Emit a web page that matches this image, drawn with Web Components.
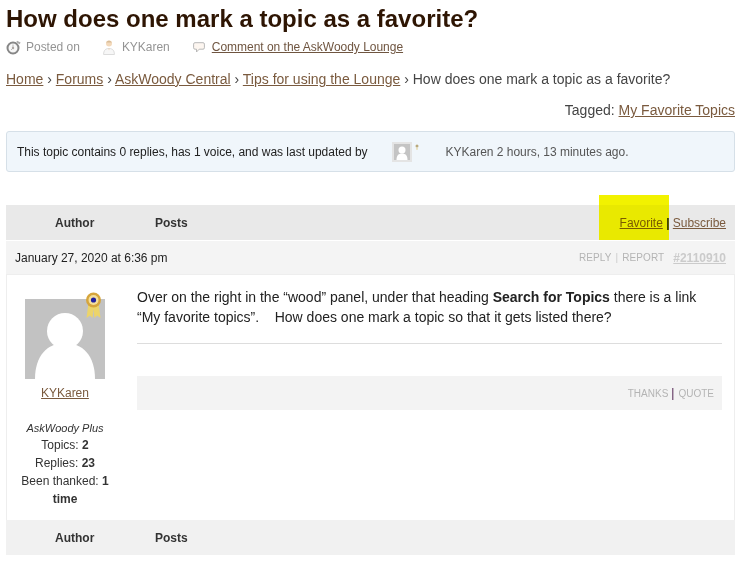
<!DOCTYPE html>
<html>
<head>
<meta charset="utf-8">
<title>How does one mark a topic as a favorite?</title>
<style>
  html, body { margin: 0; background: #fff; }
  body { font-family: "Liberation Sans", Arial, sans-serif; color: #222; }
</style>
</head>
<body>
<topic-page></topic-page>

<template id="topic-head-tpl">
  <style>
    :host { display: block; }
    h1 { margin: 0; font-size: 24px; line-height: 28px; font-weight: 700; color: #2e1503; padding-top: 5px; }
    .meta { display: flex; align-items: center; height: 20px; margin-top: 4px; font-size: 12px; letter-spacing: -.02px; color: #949494; }
    .meta svg { display: block; flex: none; }
    .m1 { margin-right: 5px; }
    .m2 { margin-left: 23px; margin-right: 7px; }
    .m3 { margin-left: 23px; margin-right: 7px; }
    .meta a { color: #6f5540; text-decoration: underline; }
    .crumbs { margin-top: 12px; font-size: 14px; line-height: 20px; color: #444; }
    .crumbs a { color: #7a5a3e; text-decoration: underline; }
    .tags { margin-top: 11px; text-align: right; font-size: 14px; line-height: 20px; color: #444; }
    .tags a { color: #7a5a3e; text-decoration: underline; }
  </style>
  <h1>How does one mark a topic as a favorite?</h1>
  <div class="meta">
    <svg class="m1" width="15" height="15" viewBox="0 0 15 15">
      <circle cx="7" cy="8" r="5.500" fill="#f7f7f7" stroke="#868686" stroke-width="2"/>
      <circle cx="7" cy="8" r="1.200" fill="#b0a6a0"/>
      <path d="M7 4.500V8L5 10" fill="none" stroke="#a8a8a8" stroke-width=".8"/>
      <path d="M11 .8l3.600 1.800-1 1.700-3.300-2z" fill="#aaa"/>
    </svg>
    <span>Posted on</span>
    <svg class="m2" width="12" height="15" viewBox="0 0 12 15">
      <circle cx="6" cy="3.600" r="3" fill="#f3d9bb"/>
      <path d="M3.200 2.500c.8-2.200 4.800-2.200 5.600 0z" fill="#d9bd98"/>
      <path d="M.6 14.500c0-4.200 2-6 5.400-6s5.400 1.800 5.400 6z" fill="#f7f7f7" stroke="#d4d4d4" stroke-width=".8"/>
      <path d="M5.200 8.500h1.600l-.8 2z" fill="#f0d4b4"/>
    </svg>
    <span>KYKaren</span>
    <svg class="m3" width="12" height="11" viewBox="0 0 12 11">
      <path d="M2 .7h8a1.400 1.400 0 0 1 1.400 1.400v3.700a1.400 1.400 0 0 1-1.400 1.400H6.200L3.500 10V7.200H2A1.400 1.400 0 0 1 .6 5.800V2.100A1.400 1.400 0 0 1 2 .7z" fill="#fdf6f0" stroke="#b8b8b8"/>
    </svg>
    <a href="#">Comment on the AskWoody Lounge</a>
  </div>
  <div class="crumbs"><a href="#">Home</a> › <a href="#">Forums</a> › <a href="#">AskWoody Central</a> › <a href="#">Tips for using the Lounge</a> › How does one mark a topic as a favorite?</div>
  <div class="tags">Tagged: <a href="#">My Favorite Topics</a></div>
</template>

<template id="topic-notice-tpl">
  <style>
    :host { display: flex; align-items: center; height: 39px; margin-top: 11px; padding-left: 10px; background: #f0f6fb; border: 1px solid #d6e0e8; border-radius: 3px; font-size: 12px; letter-spacing: -.015px; color: #222; }
    .thumb { display: block; margin-left: 24px; flex: none; }
    .dot { display: block; margin-left: 3px; flex: none; align-self: flex-start; margin-top: 12px; }
    .who { margin-left: 27px; color: #555; }
  </style>
  <span>This topic contains 0 replies, has 1 voice, and was last updated by</span>
  <svg class="thumb" width="20" height="20" viewBox="0 0 20 20">
    <rect width="20" height="20" fill="#e4e4e4"/>
    <rect x="2" y="2" width="16" height="16" fill="#c4c4c4"/>
    <circle cx="10" cy="8" r="3.500" fill="#fff"/>
    <path d="M4.500 18c0-4.500 2-6.500 5.500-6.500s5.500 2 5.500 6.500z" fill="#fff"/>
  </svg>
  <svg class="dot" width="4" height="6" viewBox="0 0 4 6">
    <circle cx="2" cy="2" r="1.500" fill="#b9a97e"/>
    <path d="M1 3.500h2L2.500 6h-1z" fill="#e8dcae"/>
  </svg>
  <span class="who">KYKaren 2 hours, 13 minutes ago.</span>
</template>

<template id="forum-bar-tpl">
  <style>
    :host { display: flex; align-items: center; height: 35px; padding-right: 9px; background: var(--bar-bg, #e9e9e9); font-size: 12px; font-weight: 700; color: #333; }
    .author { margin-left: 49px; width: 100px; }
    .right { margin-left: auto; font-weight: 400; color: #222; letter-spacing: -.02px; }
  </style>
  <span class="author">Author</span>
  <span>Posts</span>
  <span class="right"><slot></slot></span>
</template>

<template id="post-body-tpl">
  <style>
    :host { display: grid; grid-template-columns: 116px 1fr; min-height: 245px; border-left: 1px solid #eee; border-right: 1px solid #eee; box-sizing: border-box; }
    .author { display: flex; flex-direction: column; align-items: center; padding-top: 24px; font-size: 12px; line-height: 18px; color: #333; text-align: center; }
    .avatar { position: relative; width: 80px; height: 80px; }
    .avatar svg.pic { display: block; }
    .badge { position: absolute; left: 60px; top: -7px; }
    .name { margin-top: 4px; color: #7a5a3e; text-decoration: underline; line-height: 20px; letter-spacing: -.03px; }
    .rank { margin-top: 16px; font-size: 11px; font-style: italic; }
    .stats { width: 96px; margin-top: -1px; }
    .stats div { line-height: 18px; }
    .main { padding: 12px 12px 0 14px; }
    p { margin: 0; font-size: 14px; line-height: 20px; color: #222; padding-bottom: 16px; border-bottom: 1px solid #ddd; }
    .actions { display: flex; justify-content: flex-end; align-items: center; gap: 4px; height: 34px; margin-top: 32px; padding-right: 8px; background: #f3f3f3; font-size: 10px; color: #b4b4b4; }
    .sep { margin-left: -1px; color: #4a1a4a; font-size: 12px; }
  </style>
  <div class="author">
    <div class="avatar">
      <svg class="pic" width="80" height="80" viewBox="0 0 80 80">
        <rect width="80" height="80" fill="#c2c2c2"/>
        <circle cx="40" cy="32" r="18" fill="#fff"/>
        <path d="M10 80C10 57 22 44 40 44S70 57 70 80z" fill="#fff"/>
      </svg>
      <svg class="badge" width="17" height="27" viewBox="0 0 17 27">
        <path d="M3.500 11L1.500 26l3.500-2.500L7.500 26 8.500 17l1 9 2.500-2.500L15.500 26l-2-15z" fill="#ecd46a"/>
        <circle cx="8.500" cy="8" r="7.500" fill="#d6a53c"/>
        <circle cx="8.500" cy="8" r="5" fill="#f4df9c"/>
        <circle cx="8.500" cy="8" r="2.600" fill="#2020a0"/>
      </svg>
    </div>
    <div class="name">KYKaren</div>
    <div class="rank">AskWoody Plus</div>
    <div class="stats">
      <div>Topics: <b>2</b></div>
      <div>Replies: <b>23</b></div>
      <div>Been thanked: <b>1</b></div>
      <div><b>time</b></div>
    </div>
  </div>
  <div class="main">
    <p><slot></slot></p>
    <div class="actions"><span>THANKS</span><span class="sep">|</span><span>QUOTE</span></div>
  </div>
</template>

<script>
function define(name, tplId) {
  customElements.define(name, class extends HTMLElement {
    constructor() {
      super()
      this.attachShadow({ mode: 'open' })
      this.shadowRoot.appendChild(document.getElementById(tplId).content.cloneNode(true))
    }
  })
}

define('topic-head', 'topic-head-tpl')
define('topic-notice', 'topic-notice-tpl')
define('forum-bar', 'forum-bar-tpl')
define('post-body', 'post-body-tpl')

class TopicPage extends HTMLElement {
  constructor() {
    super()
    this.attachShadow({ mode: 'open' })
    this.shadowRoot.innerHTML = `
      <style>
        :host { display: block; position: relative; padding: 0 6px; width: 741px; height: 565px; box-sizing: border-box; overflow: hidden; }
        .forum { margin-top: 33px; }
        a { color: #7a5a3e; text-decoration: underline; }
        .date { display: flex; align-items: center; height: 33px; margin-top: 1px; padding: 0 9px; background: #f4f4f4; border-bottom: 1px solid #eee; font-size: 12px; letter-spacing: -.01px; color: #222; }
        .links { margin-left: auto; display: flex; align-items: center; font-size: 10px; letter-spacing: .1px; color: #b4b4b4; }
        .links .bar { margin: 0 4px; color: #ccc; }
        .links a { margin-left: 9px; color: #cbcbcb; font-size: 12px; font-weight: 700; letter-spacing: 0; }
        .mark { position: absolute; left: 599px; top: 195px; width: 70px; height: 45px; background: linear-gradient(#f2f200 10px, #ffff00 10px); mix-blend-mode: multiply; }
        .pipe { font-weight: 700; }
      </style>
      <topic-head></topic-head>
      <topic-notice></topic-notice>
      <div class="forum">
        <forum-bar><a href="#">Favorite</a> <span class="pipe">|</span> <a href="#">Subscribe</a></forum-bar>
        <div class="date">
          <span>January 27, 2020 at 6:36 pm</span>
          <span class="links">REPLY<span class="bar">|</span>REPORT<a href="#">#2110910</a></span>
        </div>
        <post-body><span style="display:block">Over on the right in the “wood” panel, under that heading <b>Search for Topics</b> there is a link</span><span style="display:block">“My favorite topics”. &nbsp;&nbsp; How does one mark a topic so that it gets listed there?</span></post-body>
        <forum-bar style="--bar-bg:#f1f1f1"></forum-bar>
      </div>
      <div class="mark"></div>
    `
  }
}
customElements.define('topic-page', TopicPage)
</script>
</body>
</html>
